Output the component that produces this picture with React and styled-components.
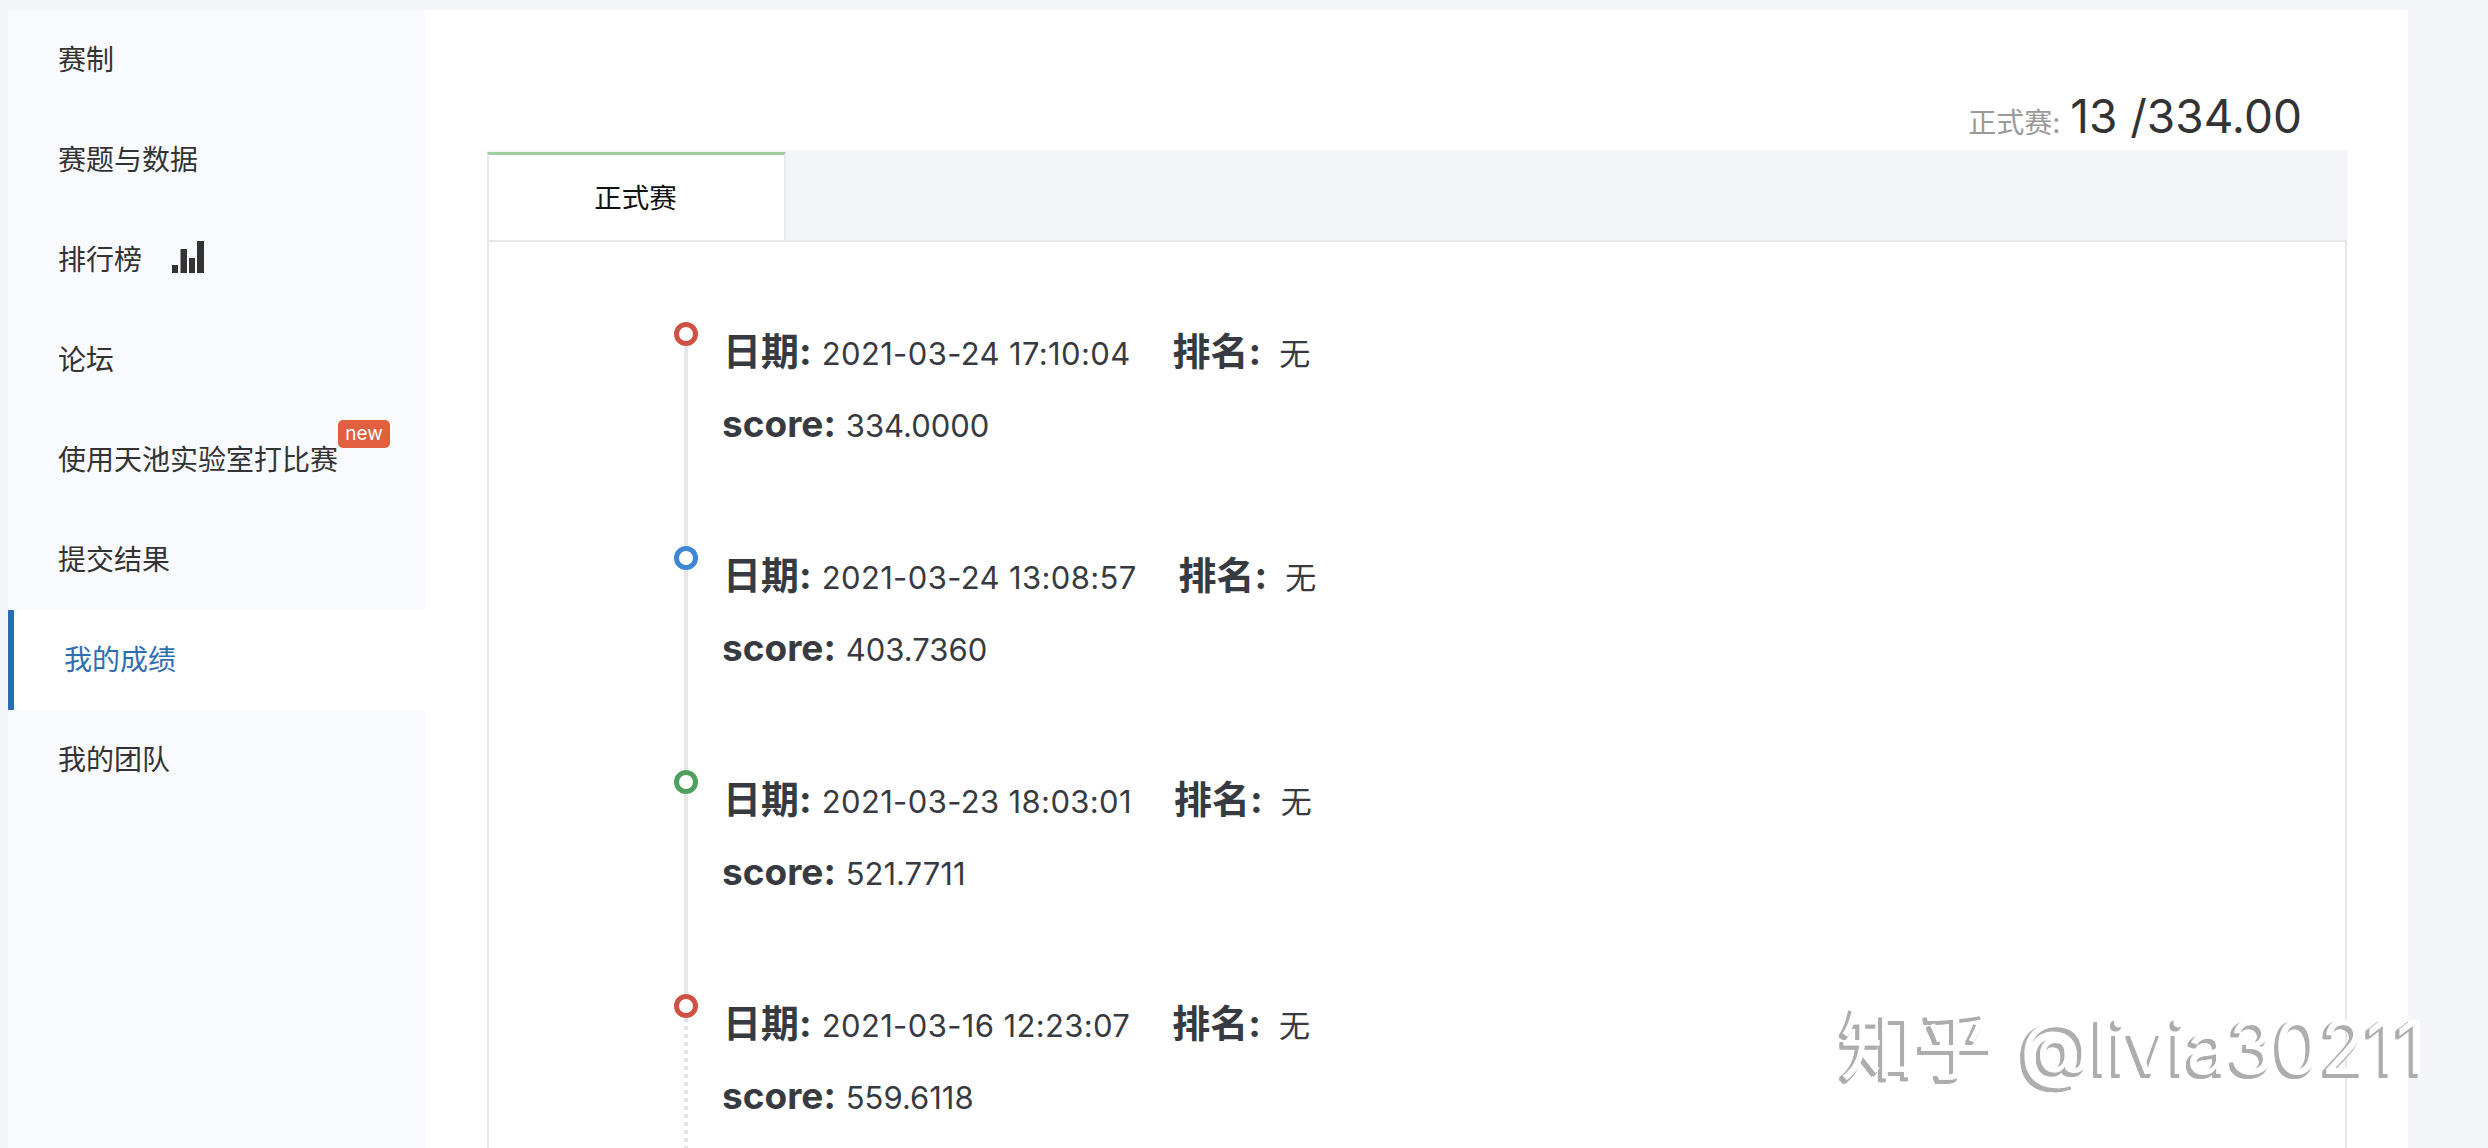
import React from "react";
import styled, { createGlobalStyle } from "styled-components";

const Global = createGlobalStyle`
  html, body { margin: 0; padding: 0; background: #f3f5f9; }
  * { box-sizing: border-box; }
  body { font-family: Inter, "Noto Sans CJK SC", sans-serif; color: #333; }
`;

const Page = styled.div`
  position: relative;
  display: flex;
  width: 2488px;
  height: 1148px;
  overflow: hidden;
  padding: 10px 80px 0 8px;
`;

const Sidebar = styled.nav`
  width: 417px;
  flex: none;
  background: #f9fafe;
  display: flex;
  flex-direction: column;
`;

const NavRow = styled.div`
  position: relative;
  height: 100px;
  flex: none;
  display: flex;
  align-items: center;
  padding-left: ${(p) => (p.$active ? "51px" : "51px")};
  font-size: 28px;
  color: ${(p) => (p.$active ? "#2f6db1" : "#333")};
  background: ${(p) => (p.$active ? "#fff" : "transparent")};
  border-left: ${(p) => (p.$active ? "6px solid #2b6bb0" : "0")};
`;

const NavLabel = styled.span`
  position: relative;
  display: inline-block;
  line-height: 40px;
  margin-left: -1px;
`;

const NewBadge = styled.span`
  position: absolute;
  left: 100%;
  top: -20px;
  margin-left: 0;
  width: 52px;
  height: 28px;
  border-radius: 5px;
  background: #e0603f;
  color: #fff;
  font-size: 19px;
  line-height: 27px;
  text-align: center;
`;

const ChartIcon = styled.svg`
  width: 32px;
  height: 32px;
  margin-left: 30px;
  margin-top: -6px;
  fill: #333;
`;

const Main = styled.main`
  flex: 1;
  background: #fff;
  padding: 0 61px 0 62px;
  display: flex;
  flex-direction: column;
`;

const Summary = styled.div`
  height: 140px;
  flex: none;
  display: flex;
  justify-content: flex-end;
  align-items: baseline;
  gap: 10px;
  padding-right: 45px;
  padding-top: 83px;
  line-height: 46px;
`;

const SummaryLabel = styled.span`
  font-size: 28px;
  color: #999;
`;

const SummaryValue = styled.span`
  font-size: 46px;
  color: #333;
`;

const TabBar = styled.div`
  height: 92px;
  flex: none;
  background: #f3f5f9;
  display: flex;
  align-items: flex-end;
  border-bottom: 2px solid #e5e7ea;
`;

const Tab = styled.div`
  width: 299px;
  height: 88px;
  background: #fff;
  border-top: 3px solid #9fcf9f;
  border-left: 2px solid #e5e7ea;
  border-right: 2px solid #e8eaed;
  display: flex;
  align-items: center;
  justify-content: center;
  font-size: 27.5px;
  color: #111;
  padding: 0 2px 3px 0;
`;

const Panel = styled.section`
  flex: 1;
  border-left: 2px solid #e5e7ea;
  border-right: 2px solid #e5e7ea;
  padding: 80px 0 0 185px;
  min-height: 0;
`;

const Item = styled.div`
  display: flex;
  height: 224px;
  gap: 27px;
`;

const Rail = styled.div`
  width: 24px;
  flex: none;
  display: flex;
  flex-direction: column;
  align-items: center;
`;

const Dot = styled.span`
  width: 24px;
  height: 24px;
  flex: none;
  border-radius: 50%;
  background: #fff;
  border: 5px solid ${(p) => p.$color};
`;

const Line = styled.span`
  flex: 1;
  width: 4px;
  background: ${(p) =>
    p.$dashed
      ? "repeating-linear-gradient(to bottom, #e3e3e3 0 4px, transparent 4px 8px)"
      : "#e6e6e6"};
`;

const Body = styled.div`
  color: #373b41;
  padding-top: 5px;
  margin-left: -2px;
`;

const TopLine = styled.div`
  display: flex;
  align-items: baseline;
  height: 48px;
  line-height: 48px;
  font-size: 31px;
`;

const DateText = styled.span`
  letter-spacing: 0.36px;
`;

const ScoreLine = styled.div`
  display: flex;
  align-items: baseline;
  margin-top: 25px;
  margin-left: -1px;
  height: 48px;
  line-height: 48px;
  font-size: 31px;
`;

const Key = styled.b`
  font-size: ${(p) => p.$size || 38}px;
  font-weight: 700;
  margin-right: ${(p) => p.$gap || 10}px;
`;

const Rank = styled.span`
  margin-left: 42px;
  display: flex;
  align-items: baseline;
`;

const RankValue = styled.span`
  font-size: 31px;
  margin-left: 8px;
`;

const Watermark = styled.div`
  position: absolute;
  left: 1840px;
  top: 1004px;
  font-size: 74px;
  line-height: 84px;
  white-space: nowrap;
  color: #fff;
  text-shadow: -4px 4px 0 #adadad, -3px 3px 0 #adadad, -2px 4px 0 #adadad, -4px 2px 0 #adadad;
  display: flex;
  align-items: baseline;
  gap: 26px;
`;

const WatermarkCjk = styled.span`
  font-size: 77px;
  font-weight: 400;
`;

const nav = ["赛制", "赛题与数据", "排行榜", "论坛", "使用天池实验室打比赛", "提交结果", "我的成绩", "我的团队"];
const rows = [
  ["#cf5044", "2021-03-24 17:10:04", "334.0000"],
  ["#3f87d6", "2021-03-24 13:08:57", "403.7360"],
  ["#4f9f5f", "2021-03-23 18:03:01", "521.7711"],
  ["#cf5044", "2021-03-16 12:23:07", "559.6118"],
];

export default function App() {
  return (
    <Page>
      <Global />
      <Sidebar>
        {nav.map((n) => (
          <NavRow key={n} $active={n === "我的成绩"}>
            <NavLabel>
              {n}
              {n === "使用天池实验室打比赛" && <NewBadge>new</NewBadge>}
            </NavLabel>
            {n === "排行榜" && (
              <ChartIcon viewBox="0 0 32 32">
                <rect x="0" y="24" width="6" height="8" />
                <rect x="8.5" y="8" width="6.5" height="24" />
                <rect x="17" y="17" width="6" height="15" />
                <rect x="25" y="0" width="7" height="32" />
              </ChartIcon>
            )}
          </NavRow>
        ))}
      </Sidebar>
      <Main>
        <Summary>
          <SummaryLabel>正式赛:</SummaryLabel>
          <SummaryValue>13 /334.00</SummaryValue>
        </Summary>
        <TabBar>
          <Tab>正式赛</Tab>
        </TabBar>
        <Panel>
          {rows.map(([color, date, score], i) => (
            <Item key={date}>
              <Rail>
                <Dot $color={color} />
                <Line $dashed={i === rows.length - 1} />
              </Rail>
              <Body>
                <TopLine>
                  <Key>日期:</Key>
                  <DateText>{date}</DateText>
                  <Rank>
                    <Key>排名:</Key>
                    <RankValue>无</RankValue>
                  </Rank>
                </TopLine>
                <ScoreLine>
                  <Key $size={37} $gap={10}>score:</Key>
                  {score}
                </ScoreLine>
              </Body>
            </Item>
          ))}
        </Panel>
      </Main>
      <Watermark>
        <WatermarkCjk>知乎</WatermarkCjk>
        <span>@livia30211</span>
      </Watermark>
    </Page>
  );
}
